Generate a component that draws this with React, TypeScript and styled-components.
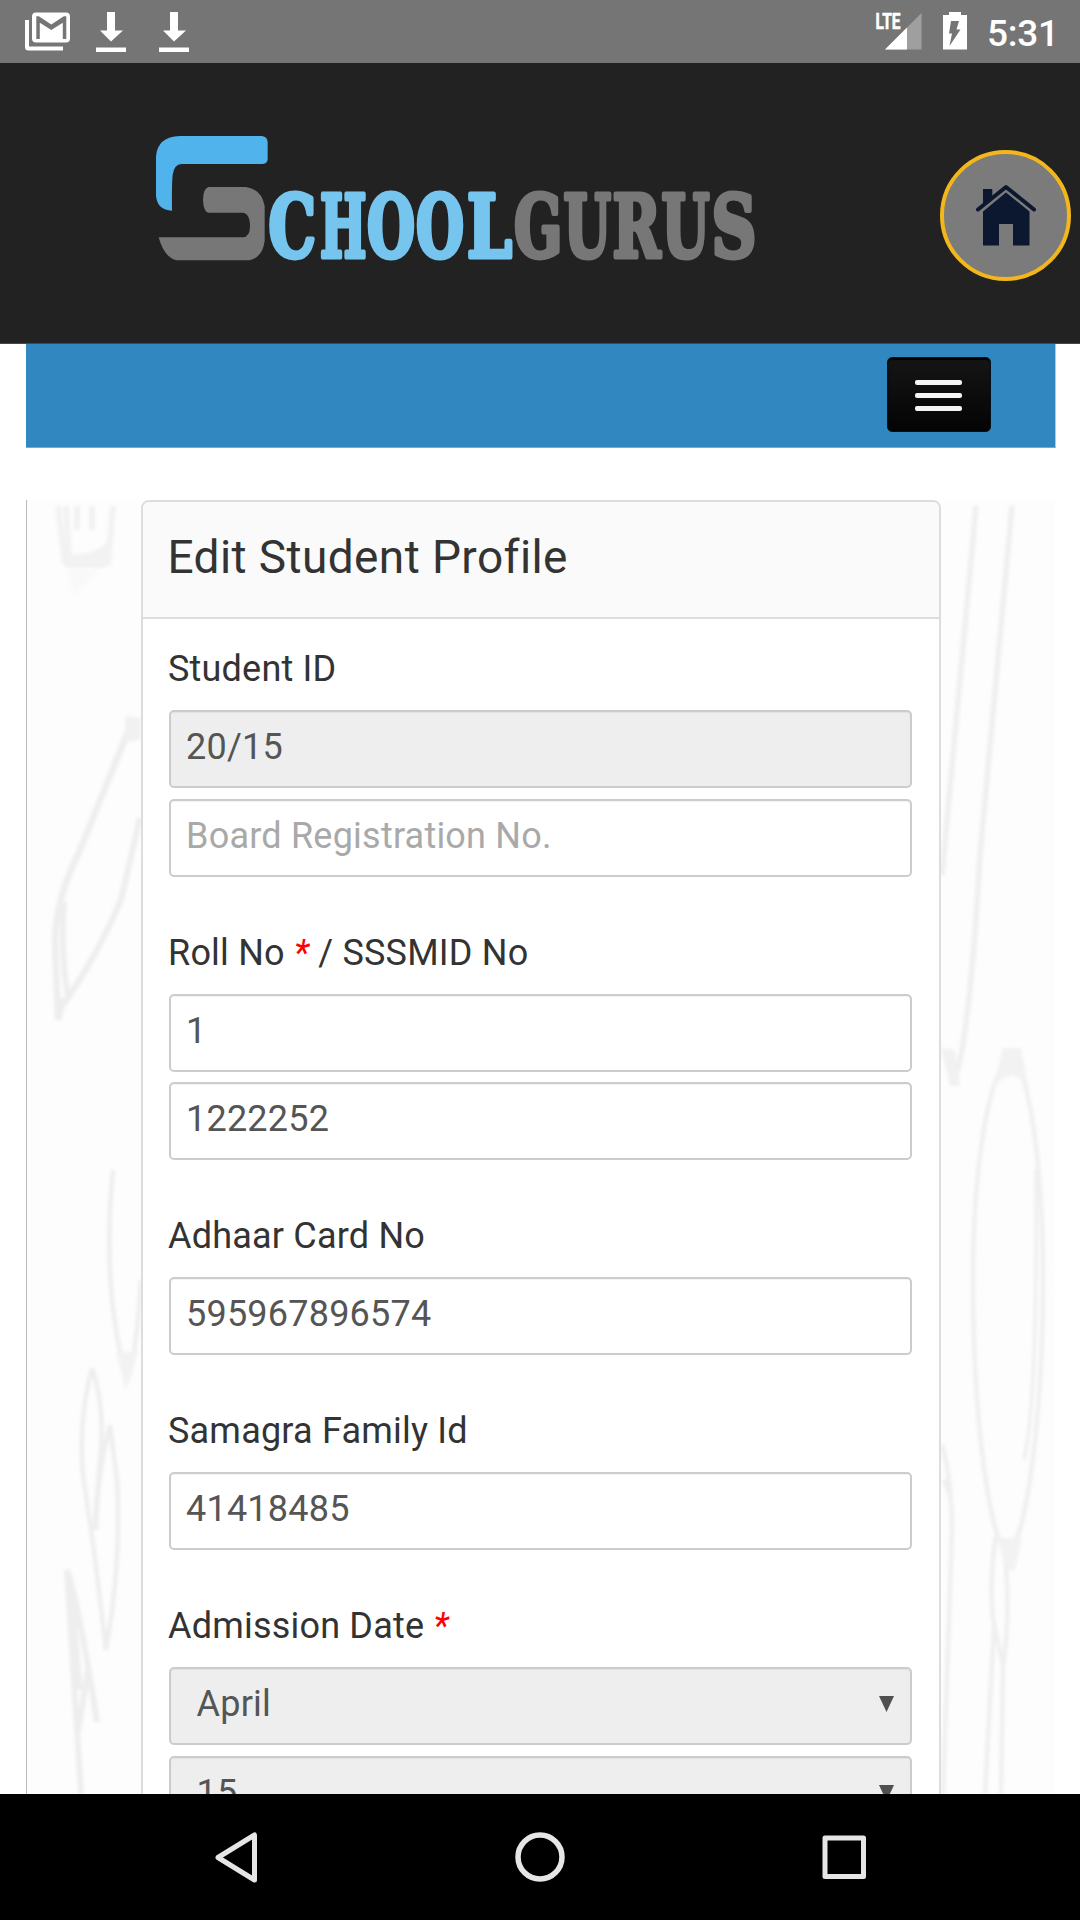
import React from "react";
import styled, { createGlobalStyle } from "styled-components";

const GlobalStyle = createGlobalStyle`
  body { margin: 0; background: #fff; }
  *, *::before, *::after { box-sizing: border-box; }
  svg { display: block; flex: none; }
`;

const Screen = styled.div`
  width: 1080px;
  height: 1920px;
  display: flex;
  flex-direction: column;
  overflow: hidden;
  background: #fff;
  font-family: Roboto, "Liberation Sans", sans-serif;
`;

const StatusBar = styled.header`
  height: 63px;
  flex: none;
  display: flex;
  align-items: flex-start;
  justify-content: space-between;
  background: #757575;
`;

const Clock = styled.span`
  width: 93px;
  font-size: 37px;
  line-height: 63px;
  font-weight: 500;
  color: #fff;
  padding-top: 2px;
  letter-spacing: -0.3px;
`;

const StatusGroup = styled.div`
  display: flex;
  height: 63px;
`;

const Brand = styled.div`
  height: 281px;
  flex: none;
  display: flex;
  align-items: flex-start;
  justify-content: space-between;
  padding: 57px 9px 0 140px;
  background: #222;
  border-bottom: 1px solid #484848;
`;

const HomeButton = styled.button`
  width: 131px;
  height: 131px;
  margin-top: 30px;
  padding: 0;
  display: flex;
  align-items: center;
  justify-content: center;
  border: 4px solid #f3b71b;
  border-radius: 50%;
  background: #7b7b7b;
`;

const NavStrip = styled.nav`
  height: 104px;
  flex: none;
  margin: 0 24px 0 26px;
  padding: 13px 64.5px 0 0;
  display: flex;
  justify-content: flex-end;
  align-items: flex-start;
  background: #3187c0;
  border-right: 1px solid #a5cbe5;
  border-bottom: 1px solid #6fabd5;
`;

const MenuButton = styled.button`
  width: 104px;
  height: 75px;
  padding: 1px 0 0;
  display: flex;
  flex-direction: column;
  align-items: center;
  justify-content: center;
  gap: 8px;
  border: 1px solid #06121a;
  border-radius: 5px;
  background: linear-gradient(#151515, #040404);
  box-shadow: inset 0 2px 1px #000;
`;

const MenuBar = styled.span`
  width: 47px;
  height: 5px;
  border-radius: 2px;
  background: #f5f5f5;
`;

const Content = styled.main`
  flex: 1;
  min-height: 0;
  margin: 52px 25px 0 26px;
  display: flex;
  overflow: hidden;
  background: #fdfdfd;
  border-left: 1px solid #bcbcbc;
`;

const Panel = styled.section`
  width: 800px;
  height: 1400px;
  flex: none;
  border: 2px solid #ddd;
  border-radius: 8px;
  background: #fff;
  overflow: hidden;
`;

const PanelTitle = styled.h1`
  height: 117px;
  margin: 0;
  padding: 0 24.5px;
  border-bottom: 2px solid #ddd;
  background: #fafafa;
  color: #333;
  font-size: 46px;
  font-weight: 400;
  line-height: 110px;
  letter-spacing: 0.4px;
`;

const Form = styled.div`
  padding: 24px 27px 0 26px;
  display: flex;
  flex-direction: column;
  gap: 50px;
`;

const Group = styled.div`
  display: flex;
  flex-direction: column;
  gap: 10.5px;
`;

const Label = styled.label`
  height: 56.5px;
  margin-left: -1px;
  color: #333;
  font-size: 36px;
  line-height: 53.5px;
  letter-spacing: 0.2px;
  white-space: pre;
`;

const Required = styled.span`
  color: #f00;
  font-style: italic;
`;

const Field = styled.div<{ $disabled?: boolean; $placeholder?: boolean; $select?: boolean }>`
  height: 78px;
  display: flex;
  align-items: center;
  justify-content: space-between;
  padding: 0 16px 3.5px ${(p) => (p.$select ? 25.5 : 15)}px;
  border: 2px solid #ccc;
  border-radius: 5px;
  background: ${(p) => (p.$disabled ? "#eee" : "#fff")};
  box-shadow: inset 0 1px 1px rgba(0, 0, 0, 0.05);
  color: ${(p) => (p.$placeholder ? "#a9a9a9" : "#555")};
  font-size: 36px;
  letter-spacing: 0.22px;
`;

const AndroidNav = styled.footer`
  height: 126px;
  flex: none;
  display: flex;
  align-items: flex-start;
  background: #000;
`;

interface FieldData {
  text: string;
  disabled?: boolean;
  placeholder?: boolean;
  select?: boolean;
}

const groups: { label: React.ReactNode; fields: FieldData[] }[] = [
  {
    label: "Student ID",
    fields: [
      { text: "20/15", disabled: true },
      { text: "Board Registration No.", placeholder: true },
    ],
  },
  {
    label: (
      <>
        Roll No <Required>*</Required> / SSSMID No
      </>
    ),
    fields: [{ text: "1" }, { text: "1222252" }],
  },
  { label: "Adhaar Card No", fields: [{ text: "595967896574" }] },
  { label: "Samagra Family Id", fields: [{ text: "41418485" }] },
  {
    label: (
      <>
        Admission Date <Required>*</Required>
      </>
    ),
    fields: [
      { text: "April", disabled: true, select: true },
      { text: "15", disabled: true, select: true },
    ],
  },
];

const Notifications = () => (
  <svg width="200" height="63" viewBox="0 0 200 63" fill="#fff">
    <path d="M25 20h4v26.500h34v4H28.500q-3.500 0-3.500-3.500z" />
    <path
      fillRule="evenodd"
      d="M36 12.500h30q4 0 4 4v22q0 4-4 4H36q-4 0-4-4v-22q0-4 4-4zM36.300 16.200V39h3.500V22.800L51.300 30l11.500-7.200V39h3.500V16.200h-2.500L51.300 24.500 38.800 16.200z"
    />
    <path d="M107 12h8v18.500h8L111 41.500 100 30.500h7zM96 47.500h30v4.500H96z" />
    <path d="M170 12h8v18.500h8L174 41.500 163 30.500h7zM159 47.500h30v4.500h-30z" />
  </svg>
);

const SystemIcons = () => (
  <svg width="147" height="63" viewBox="840 0 147 63" fill="#fff">
    <path d="M921.500 13v36.500h-36.500z" fill="#9f9f9f" />
    <path d="M907 27.500v22h-22z" />
    <text
      x="875.500"
      y="29"
      fontFamily="Roboto"
      fontWeight="700"
      fontSize="22"
      textLength="25"
      lengthAdjust="spacingAndGlyphs"
      stroke="#fff"
      strokeWidth="0.6"
    >
      LTE
    </text>
    <path fillRule="evenodd" d="M949 12h12v3h6v34.500h-24V15h6zM951 21h8l-2.500 8.500h4L949.500 46l2.500-12.500h-3z" />
  </svg>
);

const letters: [string, number, number, string][] = [
  ["C", 268.5, 47.5, "#76c5ee"],
  ["H", 320, 46.5, "#76c5ee"],
  ["O", 367, 48, "#76c5ee"],
  ["O", 416, 48, "#76c5ee"],
  ["L", 467, 45, "#76c5ee"],
  ["G", 514, 48.5, "#777"],
  ["U", 563.5, 47.5, "#777"],
  ["R", 612.5, 48, "#777"],
  ["U", 661.5, 48, "#777"],
  ["S", 711.5, 45, "#777"],
];

const Logo = () => (
  <svg width="640" height="160" viewBox="140 120 640 160">
    <g transform="translate(140 120) scale(.33333)">
      <path
        fill="#51b3ec"
        d="M120 48H366Q382 50 383 66V116Q383 131 368 132H125Q102 133 98 165Q95 190 96 272Q52 270 48 228V110Q52 50 120 48Z"
      />
      <path
        fill="#777"
        d="M206 201H318Q365 208 374 258V362Q368 412 328 421H110Q72 412 56 352H308Q330 350 330 320Q330 280 308 278H206Q190 276 189 240Q190 204 206 201Z"
      />
    </g>
    <g fontFamily="DejaVu Serif" fontWeight="700" fontSize="85.500" strokeWidth="5" strokeLinejoin="round">
      {letters.map(([ch, x, w, color], i) => (
        <text key={i} x={x} y="257" textLength={w} lengthAdjust="spacingAndGlyphs" fill={color} stroke={color}>
          {ch}
        </text>
      ))}
    </g>
  </svg>
);

const HouseIcon = () => (
  <svg width="123" height="123" viewBox="944 154 123 123">
    <path fill="#0b1830" d="M1006 192.500l23.500 19v34H1013V224h-14v21.500h-16v-34z" />
    <path fill="#0b1830" d="M983 189h9.300v9l-9.300 8z" />
    <path d="M978 209.500l28-22.500 28 22.500" fill="none" stroke="#0b1830" strokeWidth="4" strokeLinecap="round" strokeLinejoin="round" />
  </svg>
);

const Doodles = styled.g`
  filter: blur(1.8px);
`;

const LeftDoodles = () => (
  <svg width="114" height="1294" viewBox="27 500 114 1294" fill="none" stroke="#eee" strokeWidth="4.5">
    <Doodles>
      <path d="M58 506L65 565M66 506l3 50M77 506v24M92 506v24M113 506l-5 60" strokeWidth="6" stroke="#f2f2f2" />
      <path d="M62 552q26 8 48-12l-5 28H66z" fill="#f2f2f2" stroke="none" />
      <path d="M66 570h34l-26 26z" fill="#f9f9f9" stroke="none" />
      <path d="M141 724q-12 0-18 20L80 850Q56 898 55 940L58 1020L64 998" strokeWidth="6.5" />
      <path d="M141 718v22l-16 2V716z" fill="#f1f1f1" stroke="none" />
      <path d="M140 818L121 900Q100 950 68 998Q60 950 64 902" strokeWidth="6" />
      <path d="M113 1170Q104 1260 117 1336L126 1382Q135 1370 141 1280" />
      <path d="M116 1352h22l-12 38z" fill="#f2f2f2" stroke="none" />
      <path d="M92 1368Q78 1420 83 1475L94 1550 106 1650Q122 1560 117 1480L110 1425 Q98 1470 96 1530" />
      <path d="M92 1368Q106 1410 100 1460L94 1530" />
      <path d="M67 1570L81 1794M67 1570Q80 1610 97 1722M78 1732L88 1670M72 1600l8 90" strokeWidth="6" />
    </Doodles>
  </svg>
);

const RightDoodles = () => (
  <svg width="114" height="1294" viewBox="941 500 114 1294" fill="none" stroke="#efefef" strokeWidth="4.5">
    <Doodles>
      <path d="M976 506L942 875M1012 506L980 855Q972 1000 960 1060L956 1075" strokeWidth="5.500" />
      <path d="M941 1048l14 2 5 36h-10z" fill="#f1f1f1" stroke="none" />
      <path d="M1011 1058C988 1070 973 1170 973 1280C973 1420 990 1545 1008 1552C1025 1545 1043 1420 1043 1280C1043 1170 1030 1070 1011 1058Z" />
      <path d="M1003 1048h18l8 42q-18-28-36 0z" fill="#f2f2f2" stroke="none" />
      <path d="M998 1538h24l-7 32h-10z" fill="#f2f2f2" stroke="none" />
      <path d="M1036 1170Q1038 1400 1024 1460" strokeWidth="3.5" />
      <path d="M996 1535Q989 1580 993 1620L1003 1665M1006 1565Q1010 1620 1003 1667L1001 1794M994 1627L985 1794" />
      <path d="M942 1445Q952 1480 952 1530L943 1794M944 1480l6 16" />
    </Doodles>
  </svg>
);

const Arrow = () => (
  <svg width="15" height="16" viewBox="0 0 15 16">
    <path d="M0 0h15L7.500 16z" fill="#505050" />
  </svg>
);

export default function App() {
  return (
    <Screen>
      <GlobalStyle />
      <StatusBar>
        <Notifications />
        <StatusGroup>
          <SystemIcons />
          <Clock>5:31</Clock>
        </StatusGroup>
      </StatusBar>
      <Brand>
        <Logo />
        <HomeButton aria-label="Home">
          <HouseIcon />
        </HomeButton>
      </Brand>
      <NavStrip>
        <MenuButton aria-label="Menu">
          <MenuBar />
          <MenuBar />
          <MenuBar />
        </MenuButton>
      </NavStrip>
      <Content>
        <LeftDoodles />
        <Panel>
          <PanelTitle>Edit Student Profile</PanelTitle>
          <Form>
            {groups.map((g, i) => (
              <Group key={i}>
                <Label>{g.label}</Label>
                {g.fields.map((f) => (
                  <Field key={f.text} $disabled={f.disabled} $placeholder={f.placeholder} $select={f.select}>
                    <span>{f.text}</span>
                    {f.select && <Arrow />}
                  </Field>
                ))}
              </Group>
            ))}
          </Form>
        </Panel>
        <RightDoodles />
      </Content>
      <AndroidNav>
        <svg width="1080" height="126" viewBox="0 1794 1080 126" fill="none" stroke="#e6e6e6" strokeWidth="5" strokeLinejoin="round">
          <path d="M254.500 1835v45L218 1857.500z" />
          <circle cx="540" cy="1857" r="22" strokeWidth="5.500" />
          <rect x="825" y="1838" width="38.500" height="38.500" />
        </svg>
      </AndroidNav>
    </Screen>
  );
}
